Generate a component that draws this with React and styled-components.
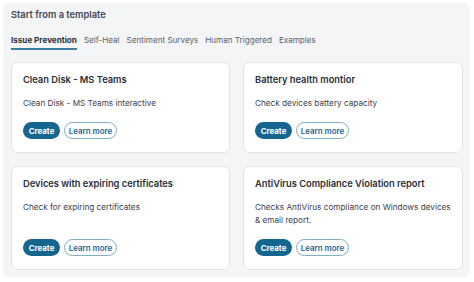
import React from 'react'
import styled, { createGlobalStyle } from "styled-components";

const GlobalStyle = createGlobalStyle`
  html, body {
    margin: 0;
    padding: 0;
    background: #ffffff;
    font-family: Inter, "Noto Sans", sans-serif;
  }
`;

const tabs = ["Issue Prevention", "Self-Heal", "Sentiment Surveys", "Human Triggered", "Examples"];

const templates = [
  { title: "Clean Disk - MS Teams", desc: "Clean Disk - MS Teams interactive" },
  { title: "Battery health montior", desc: "Check devices battery capacity" },
  { title: "Devices with expiring certificates", desc: "Check for expiring certificates" },
  { title: "AntiVirus Compliance Violation report", desc: "Checks AntiVirus compliance on Windows devices & email report." },
];

export default function App() {
  return (
    <>
      <GlobalStyle />
      <Panel>
        <Heading>Start from a template</Heading>
        <Tabs>
          {tabs.map((t, i) => (
            <Tab key={t} $active={i === 0}>{t}</Tab>
          ))}
        </Tabs>
        <Grid>
          {templates.map((t) => (
            <Card key={t.title}>
              <CardTitle>{t.title}</CardTitle>
              <CardDesc>{t.desc}</CardDesc>
              <Actions>
                <CreateButton>Create</CreateButton>
                <LearnButton>Learn more</LearnButton>
              </Actions>
            </Card>
          ))}
        </Grid>
      </Panel>
    </>
  )
}

const Panel = styled.div`
  margin: 3px 4px 0 3px;
  width: 467px;
  height: 274px;
  box-sizing: border-box;
  background: #f4f5f7;
  border-radius: 6px;
  padding: 0 7px 0 8px;
`;

const Heading = styled.div`
  font-size: 9.3px;
  font-weight: 600;
  color: #41464e;
  line-height: 14px;
  padding-top: 5px;
`;

const Tabs = styled.div`
  display: flex;
  gap: 7px;
  margin-top: 11px;
`;

const Tab = styled.div`
  font-size: 8.1px;
  line-height: 14px;
  padding-bottom: 1px;
  color: ${(p) => (p.$active ? "#2b2f36" : "#5b6068")};
  font-weight: ${(p) => (p.$active ? 700 : 400)};
  border-bottom: 2px solid ${(p) => (p.$active ? "#3a7fa5" : "transparent")};
`;

const Grid = styled.div`
  display: grid;
  grid-template-columns: 219px 220px;
  column-gap: 13px;
  row-gap: 13px;
  margin-top: 12px;
`;

const Card = styled.div`
  display: flex;
  flex-direction: column;
  background: #ffffff;
  border: 1px solid #e2e4e8;
  border-radius: 7px;
  padding: 10px 11px 13px;
`;

const CardTitle = styled.div`
  font-size: 9.3px;
  font-weight: 600;
  line-height: 14px;
  color: #2a2e35;
`;

const CardDesc = styled.div`
  margin-top: 10px;
  font-size: 8.2px;
  line-height: 13px;
  color: #3e4249;
`;

const Actions = styled.div`
  display: flex;
  gap: 4px;
  margin-top: auto;
  padding-top: 12px;
`;

const CreateButton = styled.button`
  font-family: inherit;
  font-size: 7.9px;
  font-weight: 700;
  height: 17px;
  width: 37px;
  padding: 0;
  border: none;
  border-radius: 9px;
  background: #15668f;
  color: #ffffff;
`;

const LearnButton = styled.button`
  font-family: inherit;
  font-size: 7.9px;
  font-weight: 600;
  height: 17px;
  width: 53px;
  padding: 0;
  border: 1px solid #80adc3;
  border-radius: 9px;
  background: #ffffff;
  color: #23628a;
`;
